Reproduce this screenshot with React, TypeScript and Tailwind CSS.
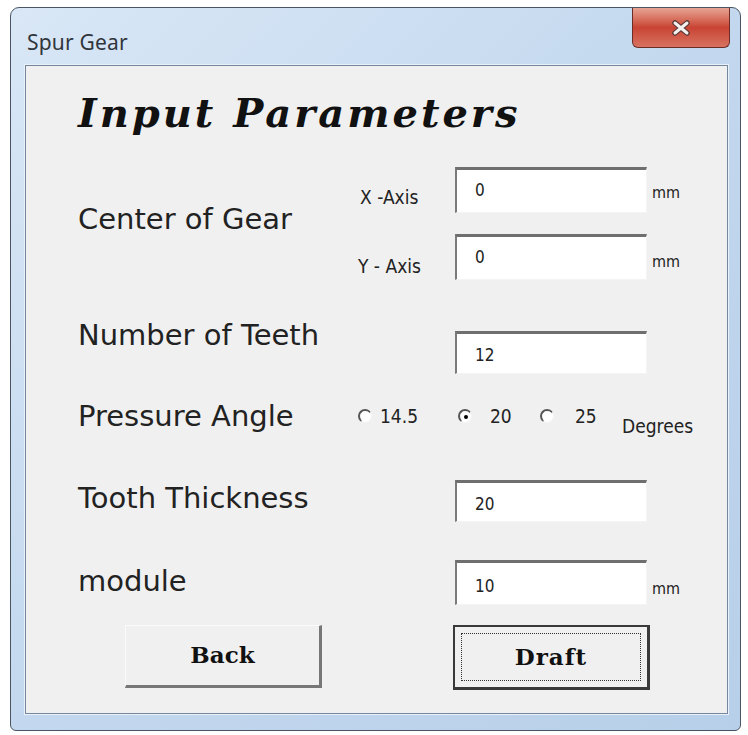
import React from "react";

const label = "text-[29px] text-[#222] font-['DejaVu_Sans',sans-serif] leading-[30px]";
const small = "text-[19px] text-[#222] font-['DejaVu_Sans_Condensed','DejaVu_Sans',sans-serif] font-stretch-condensed";
const unit = "text-[16px] text-[#222] font-['DejaVu_Sans_Condensed','DejaVu_Sans',sans-serif] font-stretch-condensed";

function Field({ value, h = "h-[46px]", pt = "pt-[8px]" }: { value: string; h?: string; pt?: string }) {
  return (
    <div
      className={`w-[192px] ${h} ${pt} pl-[18px] bg-white border-t-[3px] border-l-[2px] border-r border-b border-t-[#6f6f6f] border-l-[#7a7a7a] border-r-[#f4f4f4] border-b-[#f4f4f4] text-[17px] text-[#222] font-['DejaVu_Sans_Condensed','DejaVu_Sans',sans-serif] font-stretch-condensed`}
    >
      {value}
    </div>
  );
}

function Radio({ checked }: { checked?: boolean }) {
  return (
    <span className="w-[14px] h-[14px] shrink-0 rounded-full bg-white border-l-[2px] border-t-[2px] border-r border-b border-l-[#555] border-t-[#555] border-r-[#f4f4f4] border-b-[#f4f4f4] flex items-center justify-center">
      {checked && <span className="w-[4px] h-[4px] rounded-full bg-black" />}
    </span>
  );
}

export default function App() {
  return (
    <div className="min-h-screen bg-white pt-[7px] pl-[10px]">
      <div className="w-[731px] h-[724px] rounded-t-[9px] rounded-b-[6px] border border-[#4a5563] bg-gradient-to-br from-[#d9e7f6] via-[#c3d8ee] to-[#b8cfe9] flex flex-col">
        {/* Title bar */}
        <div className="h-[57px] flex items-start justify-between pl-[16px] shrink-0">
          <span className="mt-[19px] text-[21px] tracking-[0.2px] text-[#30353c] font-['Noto_Sans',sans-serif]">Spur Gear</span>
          <div className="mr-[10px] w-[98px] h-[40px] rounded-b-[6px] border border-t-0 border-[#6b2d25] bg-gradient-to-b from-[#e6a393] via-[#c94333] to-[#d77261] flex items-center justify-center">
            <svg width="20" height="16" viewBox="0 0 20 16">
              <path d="M4 3 L16 13 M16 3 L4 13" stroke="#5a3a36" strokeWidth="5.5" strokeLinecap="round" />
              <path d="M4 3 L16 13 M16 3 L4 13" stroke="#f4f0f0" strokeWidth="3" strokeLinecap="round" />
            </svg>
          </div>
        </div>

        {/* Client area */}
        <div className="ml-[14px] w-[703px] h-[649px] border border-[#75879c] bg-[#f0f0f0] shadow-[0_0_0_1px_#e9f1fa] flex flex-col pl-[52px]">
          <h1 className="mt-[27px] h-[40px] leading-[40px] text-[40px] font-bold italic tracking-[3px] text-[#111] font-['DejaVu_Serif',serif]">
            Input Parameters
          </h1>

          {/* Center of Gear */}
          <div className="mt-[34px] flex h-[113px]">
            <div className={`w-[280px] self-center pb-[10px] ${label}`}>Center of Gear</div>
            <div className="flex flex-col gap-[21px]">
              <div className="flex h-[46px]">
                <span className={`w-[97px] pt-[16px] pl-[2px] ${small}`}>X -Axis</span>
                <Field value="0" />
                <span className={`ml-[5px] self-end pb-[8px] ${unit}`}>mm</span>
              </div>
              <div className="flex h-[46px]">
                <span className={`w-[97px] pt-[18px] ${small}`}>Y - Axis</span>
                <Field value="0" />
                <span className={`ml-[5px] self-end pb-[6px] ${unit}`}>mm</span>
              </div>
            </div>
          </div>

          {/* Number of Teeth */}
          <div className="mt-[40px] flex h-[54px]">
            <div className={`w-[377px] ${label}`}>Number of Teeth</div>
            <div className="mt-[11px]">
              <Field value="12" h="h-[43px]" pt="pt-[9px]" />
            </div>
          </div>

          {/* Pressure Angle */}
          <div className="mt-[26px] flex h-[32px] items-center">
            <div className={`w-[280px] ${label}`}>Pressure Angle</div>
            <div className={`flex items-center ${small}`}>
              <Radio />
              <span className="ml-[8px] w-[78px]">14.5</span>
              <Radio checked />
              <span className="ml-[18px] w-[50px]">20</span>
              <Radio />
              <span className="ml-[21px] w-[47px]">25</span>
              <span className="mt-[20px]">Degrees</span>
            </div>
          </div>

          {/* Tooth Thickness */}
          <div className="mt-[48px] flex h-[42px]">
            <div className={`w-[377px] self-center pb-[6px] ${label}`}>Tooth Thickness</div>
            <Field value="20" h="h-[42px]" pt="pt-[9px]" />
          </div>

          {/* module */}
          <div className="mt-[38px] flex h-[45px]">
            <div className={`w-[377px] self-center pb-[4px] ${label}`}>module</div>
            <Field value="10" h="h-[45px]" pt="pt-[11px]" />
            <span className={`ml-[5px] self-end pb-[4px] ${unit}`}>mm</span>
          </div>

          {/* Buttons */}
          <div className="mt-[20px] flex h-[65px] font-['DejaVu_Serif',serif] font-bold text-[23px] text-[#111]">
            <button className="ml-[47px] w-[197px] h-[63px] bg-[#f0f0f0] border-t border-l border-t-[#fafafa] border-l-[#fafafa] border-r-[3px] border-b-[3px] border-r-[#777] border-b-[#777]">
              Back
            </button>
            <button className="ml-[131px] w-[197px] h-[65px] bg-[#f0f0f0] border-[2px] border-[#3a3a3a] border-r-[3px] border-b-[3px] p-[6px]">
              <span className="w-full h-full flex items-center justify-center tracking-[1px] border border-dotted border-[#333]">Draft</span>
            </button>
          </div>
        </div>
      </div>
    </div>
  );
}
